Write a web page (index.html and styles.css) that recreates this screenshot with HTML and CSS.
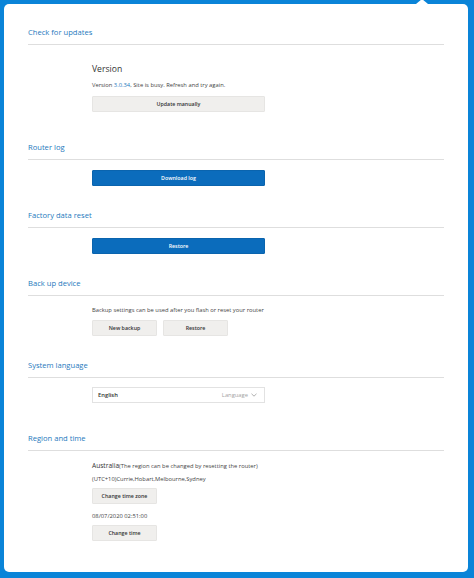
FILE: index.html
```html
<!DOCTYPE html>
<html lang="en">
<head>
<meta charset="utf-8">
<title>Settings</title>
<link rel="stylesheet" href="styles.css">
</head>
<body>
<main class="card">
  <section class="sec">
    <h2 class="sec-title">Check for updates</h2>
    <div class="sec-body sec-body--version">
      <h3 class="sub-title">Version</h3>
      <p class="txt">Version <span class="link">3.0.34</span>, Site is busy. Refresh and try again.</p>
      <button class="btn btn-grey btn-full">Update manually</button>
    </div>
  </section>

  <section class="sec">
    <h2 class="sec-title">Router log</h2>
    <div class="sec-body">
      <button class="btn btn-blue btn-full">Download log</button>
    </div>
  </section>

  <section class="sec">
    <h2 class="sec-title">Factory data reset</h2>
    <div class="sec-body">
      <button class="btn btn-blue btn-full">Restore</button>
    </div>
  </section>

  <section class="sec">
    <h2 class="sec-title">Back up device</h2>
    <div class="sec-body sec-body--tight">
      <p class="txt">Backup settings can be used after you flash or reset your router</p>
      <div class="btn-row">
        <button class="btn btn-grey btn-small">New backup</button>
        <button class="btn btn-grey btn-small">Restore</button>
      </div>
    </div>
  </section>

  <section class="sec">
    <h2 class="sec-title">System language</h2>
    <div class="sec-body sec-body--select">
      <div class="select">
        <span class="select-value">English</span>
        <span class="select-label">Language</span>
        <svg class="chev" width="6" height="4" viewBox="0 0 6 4"><path d="M0.5 0.8 L3 3.2 L5.5 0.8" fill="none" stroke="#9a9a9a" stroke-width="0.8"/></svg>
      </div>
    </div>
  </section>

  <section class="sec">
    <h2 class="sec-title">Region and time</h2>
    <div class="sec-body sec-body--region">
      <p class="txt txt-line"><span class="region">Australia</span>(The region can be changed by resetting the router)</p>
      <p class="txt txt-line">(UTC+10)Currie,Hobart,Melbourne,Sydney</p>
      <button class="btn btn-grey btn-small btn-tz">Change time zone</button>
      <p class="txt txt-date">08/07/2020 02:51:00</p>
      <button class="btn btn-grey btn-small">Change time</button>
    </div>
  </section>
</main>
</body>
</html>
```

FILE: styles.css
```css
html, body {
  margin: 0;
  height: 100%;
}

body {
  background: #0a84d8;
  padding: 4px 6px 6px 4px;
  box-sizing: border-box;
  font-family: "Open Sans", "Noto Sans", sans-serif;
  color: #333;
}

.card {
  position: relative;
  height: 568px;
  box-sizing: border-box;
  background: #fff;
  border-radius: 5px;
  padding: 22px 24px 0;
}

.card::before {
  content: "";
  position: absolute;
  top: -5px;
  right: 40px;
  width: 0;
  height: 0;
  border-left: 6px solid transparent;
  border-right: 6px solid transparent;
  border-bottom: 5px solid #fff;
}

.sec-title {
  margin: 0;
  padding-bottom: 6px;
  border-bottom: 1px solid #dedede;
  font-size: 7.6px;
  line-height: 12px;
  font-weight: 400;
  color: #2579bd;
}

.sec-body {
  margin: 10px 0 23px 64px;
  width: 173px;
  display: flex;
  flex-direction: column;
  align-items: flex-start;
}

.sec-body--version {
  margin-top: 18px;
  margin-bottom: 29px;
}

.sec-body--tight {
  margin-top: 9px;
}

.sec-body--select {
  margin-top: 9px;
  margin-bottom: 29px;
}

.sec-body--region {
  margin-top: 9px;
  margin-bottom: 0;
}

.sub-title {
  margin: 0 0 5px;
  font-size: 8.6px;
  line-height: 12px;
  font-weight: 400;
  color: #333;
}

.txt {
  margin: 0 0 6px;
  font-size: 5.8px;
  line-height: 10px;
  color: #444;
  white-space: nowrap;
}

.link {
  color: #2579bd;
}

.btn {
  height: 16px;
  box-sizing: border-box;
  border: 1px solid #e6e5e3;
  border-radius: 1px;
  font-family: inherit;
  font-size: 5.3px;
  font-weight: 600;
  padding: 0;
  cursor: pointer;
}

.btn-full {
  width: 173px;
}

.btn-small {
  width: 65px;
}

.btn-grey {
  background: #f0efed;
  color: #333;
}

.btn-blue {
  background: #0b6cbc;
  border-color: #0a64ae;
  color: #fff;
}

.btn-row {
  display: flex;
  gap: 6px;
  margin-top: -1px;
}

.select {
  width: 173px;
  height: 16px;
  box-sizing: border-box;
  border: 1px solid #e2e2e2;
  background: #fff;
  display: flex;
  align-items: center;
  padding: 0 7px 0 5px;
  font-size: 5.8px;
}

.select-value {
  font-weight: 600;
  color: #333;
  flex: 1;
}

.select-label {
  color: #a3a3a3;
  margin-right: 3px;
}

.chev {
  display: block;
}

.txt-line {
  margin: 0;
  line-height: 12.5px;
}

.region {
  font-size: 6.6px;
  color: #333;
}

.btn-tz {
  margin-top: 3px;
}

.txt-date {
  margin: 7px 0 4px;
}
```
